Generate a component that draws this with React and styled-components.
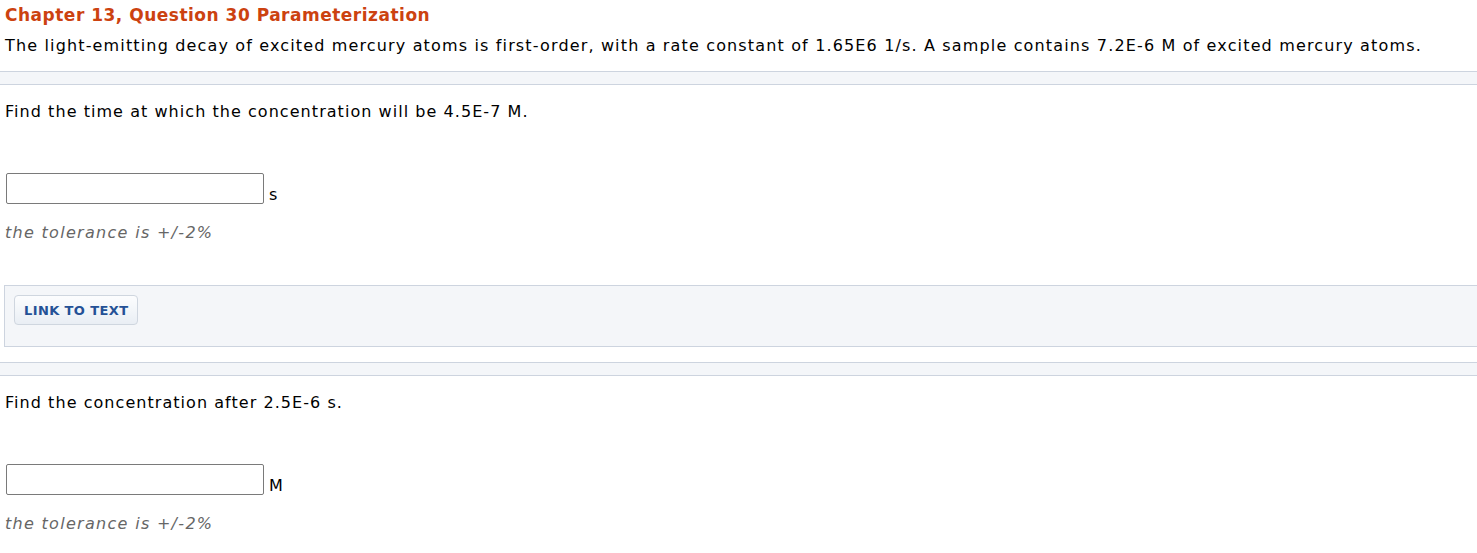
import React from 'react';
import styled, { createGlobalStyle } from 'styled-components';

const GlobalStyle = createGlobalStyle`
	body {
		margin: 0;
		background: #fff;
		font-family: 'DejaVu Sans', Verdana, sans-serif;
		color: #000;
	}
`;

const Page = styled.div`
	display: flex;
	flex-direction: column;
	width: 1477px;
`;

const Title = styled.h1`
	margin: 0;
	padding: 5px 0 0 5px;
	font-size: 17px;
	line-height: 21px;
	font-weight: bold;
	letter-spacing: 0.5px;
	color: #cc4210;
`;

const Intro = styled.p`
	margin: 0;
	padding: 9px 0 0 5px;
	font-size: 16px;
	line-height: 22px;
	letter-spacing: 1.15px;
`;

const Divider = styled.div`
	height: 12px;
	margin-top: ${(p) => p.$top}px;
	background: #f4f6f9;
	border-top: 1px solid #cdd4df;
	border-bottom: 1px solid #cdd4df;
`;

const Part = styled.section`
	display: flex;
	flex-direction: column;
	padding-left: 5px;
`;

const Question = styled.p`
	margin: 0;
	padding-top: 16px;
	font-size: 16px;
	line-height: 22px;
	letter-spacing: 1.05px;
`;

const AnswerRow = styled.div`
	display: flex;
	align-items: flex-end;
	gap: 5px;
	margin-top: 50px;
	padding-left: 1px;
`;

const Answer = styled.input`
	box-sizing: border-box;
	width: 258px;
	height: 31px;
	margin: 0;
	border: 1px solid #7a7a7a;
	border-radius: 2px;
	background: #fff;
`;

const Unit = styled.span`
	font-size: 16px;
	line-height: 18px;
	letter-spacing: 1px;
`;

const Tolerance = styled.p`
	margin: 0;
	padding-top: 18px;
	font-size: 16px;
	line-height: 22px;
	font-style: italic;
	letter-spacing: 1.3px;
	color: #666;
`;

const LinkBox = styled.div`
	display: flex;
	margin: 41px 0 0 4px;
	padding: 9px 9px 21px;
	background: #f4f6f9;
	border: 1px solid #cdd4df;
	border-right: none;
`;

const LinkButton = styled.button`
	height: 30px;
	padding: 0 9px;
	font-family: 'DejaVu Sans', Verdana, sans-serif;
	font-size: 13px;
	font-weight: bold;
	letter-spacing: 0.4px;
	color: #245196;
	background: linear-gradient(#fcfdfe, #e9eef4);
	border: 1px solid #cfd6df;
	border-radius: 4px;
`;

const App = () => (
	<Page>
		<GlobalStyle />
		<Title>Chapter 13, Question 30 Parameterization</Title>
		<Intro>
			The light-emitting decay of excited mercury atoms is first-order, with a rate constant of 1.65E6 1/s. A
			sample contains 7.2E-6 M of excited mercury atoms.
		</Intro>
		<Divider $top={14} />
		<Part>
			<Question>Find the time at which the concentration will be 4.5E-7 M.</Question>
			<AnswerRow>
				<Answer type="text" />
				<Unit>s</Unit>
			</AnswerRow>
			<Tolerance>the tolerance is +/-2%</Tolerance>
		</Part>
		<LinkBox>
			<LinkButton>LINK TO TEXT</LinkButton>
		</LinkBox>
		<Divider $top={15} />
		<Part>
			<Question>Find the concentration after 2.5E-6 s.</Question>
			<AnswerRow>
				<Answer type="text" />
				<Unit>M</Unit>
			</AnswerRow>
			<Tolerance>the tolerance is +/-2%</Tolerance>
		</Part>
	</Page>
);

export default App;
